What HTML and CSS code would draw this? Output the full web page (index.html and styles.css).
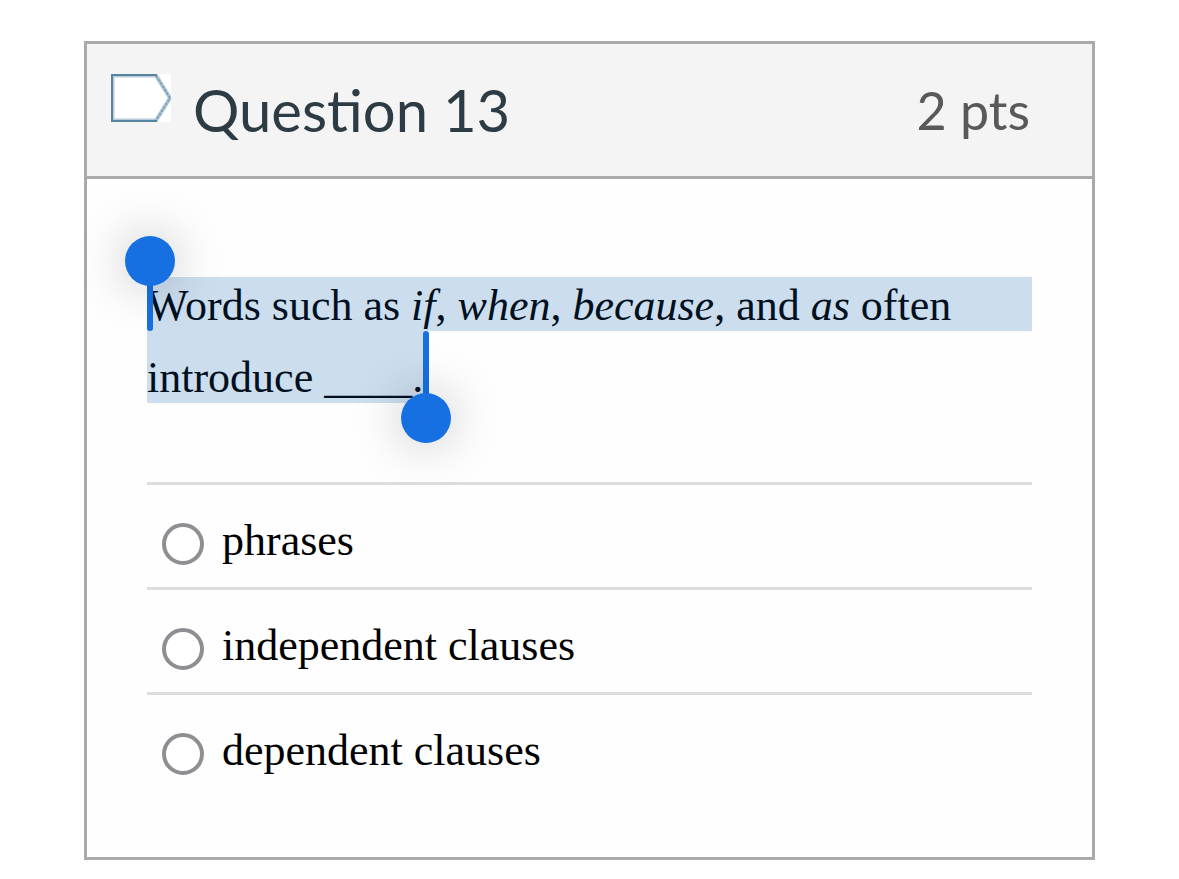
FILE: index.html
```
<!DOCTYPE html>
<html lang="en">
<head>
  <meta charset="UTF-8">
  <meta name="viewport" content="width=device-width, initial-scale=1.0">
  <title>Question 13</title>
  <link rel="stylesheet" href="styles.css">
</head>
<body>
  <main class="question">
    <header class="question-header">
      <svg class="flag" viewBox="0 0 60 48" aria-hidden="true">
        <rect width="60" height="48" fill="#fff"/>
        <path d="M1.5 1.5H45L59 24L45 46.5H1.5Z" fill="none" stroke="#b7cbd8" stroke-width="4"/>
        <path d="M45 1.5L59 24L45 46.5" fill="none" stroke="#7fa2b8" stroke-width="2" stroke-dasharray="3 1"/>
        <path d="M46 1H1V47H46" fill="none" stroke="#5785a0" stroke-width="2"/>
      </svg>
      <h1 class="question-name">Question 13</h1>
      <span class="points">2 pts</span>
    </header>

    <form class="question-body">
      <p class="question-text" id="question-text">
        <span class="selected first-line"><span class="handle handle-start"></span>Words such as <em>if</em>, <em>when</em>, <em>because</em>, and <em>as</em> often</span>
        <span class="selected last-line">introduce ____.<span class="handle handle-end"></span></span>
      </p>

      <div class="answers" role="radiogroup" aria-labelledby="question-text">
        <label class="answer">
          <input type="radio" name="answer" value="phrases">
          <span>phrases</span>
        </label>
        <label class="answer">
          <input type="radio" name="answer" value="independent">
          <span>independent clauses</span>
        </label>
        <label class="answer">
          <input type="radio" name="answer" value="dependent">
          <span>dependent clauses</span>
        </label>
      </div>
    </form>
  </main>
</body>
</html>
```

FILE: styles.css
```
* {
  box-sizing: border-box;
}

body {
  margin: 0;
  padding: 41px 84px 19px;
  background-color: #ffffff;
  color: #000000;
  font-family: "Liberation Serif", "Times New Roman", serif;
  font-size: 44px;
}

.question {
  border: 3px solid #aaaaaa;
  background-color: #fefefe;
}

.question-header {
  display: flex;
  align-items: flex-start;
  padding: 30px 62px 30px 24px;
  background-color: #f4f4f4;
  border-bottom: 3px solid #aaaaaa;
  font-family: Lato, sans-serif;
}

.flag {
  flex: none;
  width: 60px;
  height: 48px;
  margin-right: 22px;
}

.question-name {
  flex: 1;
  margin: 0;
  color: #2d3b45;
  font-size: 58px;
  font-weight: 400;
  line-height: 72px;
}

.points {
  color: #595959;
  font-size: 52px;
  line-height: 72px;
}

.question-body {
  padding: 98px 60px 60px;
}

.question-text {
  margin: 0 0 79px;
  line-height: 50px;
}

.selected {
  position: relative;
  padding-top: 4px;
  background-color: #ccddee;
  color: #001020;
}

.first-line {
  display: block;
}

.last-line {
  display: inline-block;
  vertical-align: top;
  padding: 22px 3px 0 0;
}

/* selection handles */
.handle {
  position: absolute;
  width: 6px;
  border-radius: 3px;
  background-color: #1670e2;
}

.handle::after {
  content: "";
  position: absolute;
  left: -22px;
  width: 50px;
  height: 50px;
  border-radius: 50%;
  background-color: #1670e2;
  box-shadow: 0 0 50px rgba(0, 0, 0, 0.25);
}

.handle-start {
  top: 0;
  left: 0;
  height: 54px;
}

.handle-start::after {
  bottom: 45px;
}

.handle-end {
  top: 0;
  right: -3px;
  height: 72px;
}

.handle-end::after {
  top: 62px;
}

.answer {
  display: flex;
  align-items: center;
  gap: 18px;
  height: 105px;
  padding: 16px 15px 0;
  border-top: 3px solid #dddddd;
  line-height: 54px;
}

.answer span {
  padding-bottom: 6px;
}

.answer input {
  appearance: none;
  flex: none;
  width: 42px;
  height: 42px;
  margin: 0;
  border: 4px solid #8e8e93;
  border-radius: 50%;
  background-color: #ffffff;
}

.answer input:checked {
  border-width: 13px;
  border-color: #1670e2;
}
```
